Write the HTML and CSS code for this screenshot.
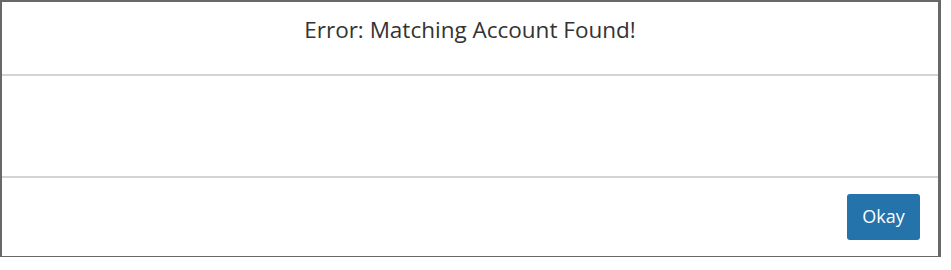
FILE: index.html
```html
<!DOCTYPE html>
<html>
<head>
<meta charset="utf-8">
<link rel="stylesheet" href="styles.css">
</head>
<body>
<div class="frame">
  <div class="modal">
    <div class="modal-header">
      <h4 class="modal-title">Error: Matching Account Found!</h4>
    </div>
    <div class="modal-body"></div>
    <div class="modal-footer">
      <button class="btn">Okay</button>
    </div>
  </div>
</div>
</body>
</html>
```
FILE: styles.css
```css
html, body {
  margin: 0;
  padding: 0;
  background: #ffffff;
  font-family: "Open Sans", "Liberation Sans", sans-serif;
}
.frame {
  width: 941px;
  box-sizing: border-box;
  background: #686868;
  padding: 2px 3px 1px 2px;
}
.modal {
  background: #ffffff;
  display: flex;
  flex-direction: column;
}
.modal-header {
  height: 72px;
  border-bottom: 2px solid #d4d4d4;
  display: flex;
  align-items: center;
  justify-content: center;
}
.modal-title {
  margin: 0;
  font-size: 22.5px;
  font-weight: 400;
  color: #333333;
  line-height: 1;
  padding-bottom: 16px;
}
.modal-body {
  height: 100px;
  border-bottom: 2px solid #d4d4d4;
}
.modal-footer {
  height: 78px;
  box-sizing: border-box;
  padding: 16px 18px 0 0;
  display: flex;
  justify-content: flex-end;
  align-items: flex-start;
}
.btn {
  width: 73px;
  height: 46px;
  border: none;
  border-radius: 3px;
  background: #2473aa;
  color: #ffffff;
  font-family: "Open Sans", "Liberation Sans", sans-serif;
  font-size: 18px;
  padding: 0 0 2px 0;
  cursor: pointer;
}
```
